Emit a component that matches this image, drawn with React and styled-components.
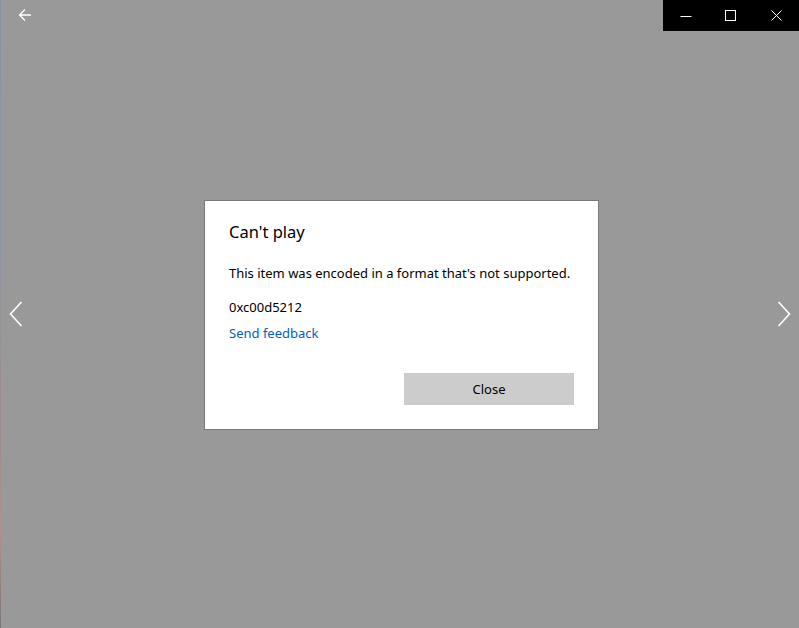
import React from 'react'
import styled, { createGlobalStyle } from 'styled-components'

const GlobalStyle = createGlobalStyle`
  html, body {
    margin: 0;
    padding: 0;
    overflow: hidden;
  }
  body {
    font-family: 'Noto Sans', 'Open Sans', sans-serif;
  }
`

const Screen = styled.div`
  background-color: #999999;
  border-left: 1px solid transparent;
  border-image: linear-gradient(to bottom, #8a949f 0%, #8e96a0 40%, #a08c8c 70%, #b09088 85%, #7a7676 100%) 1;
  box-sizing: border-box;
  display: grid;
  grid-template-rows: 32px 1fr 32px;
  height: 628px;
  width: 799px;
`

const TopBar = styled.div`
  align-items: flex-start;
  display: flex;
  justify-content: space-between;
`

const BackButton = styled.div`
  align-items: center;
  display: flex;
  height: 30px;
  justify-content: center;
  width: 48px;
`

const WindowControls = styled.div`
  background-color: #000000;
  display: flex;
  height: 31px;
  width: 136px;
`

const ControlButton = styled.div`
  align-items: center;
  display: flex;
  flex: 1;
  justify-content: center;
`

const Stage = styled.div`
  align-items: center;
  display: grid;
  grid-template-columns: 30px 1fr 30px;
`

const Flip = styled.div`
  align-items: center;
  display: flex;
  justify-content: center;
`

const DialogSlot = styled.div`
  display: flex;
  justify-content: center;
  margin-left: 3px;
  margin-top: 2px;
`

const Dialog = styled.div`
  background-color: #ffffff;
  border: 1px solid #7a7a7a;
  box-sizing: border-box;
  display: flex;
  flex-direction: column;
  height: 230px;
  padding: 19px 24px 24px;
  width: 395px;
`

const Title = styled.h2`
  color: #000000;
  font-size: 16.5px;
  font-weight: 400;
  line-height: 24px;
  margin: 0 0 19px;
`

const Text = styled.p`
  color: #000000;
  font-size: 13px;
  line-height: 20px;
  margin: ${p => p.$gap || '0'};
`

const Link = styled.a`
  color: #0063b1;
  font-size: 13px;
  line-height: 20px;
  text-decoration: none;
`

const Actions = styled.div`
  display: flex;
  justify-content: flex-end;
  margin-top: auto;
`

const Button = styled.button`
  background-color: #cccccc;
  border: none;
  color: #000000;
  font-family: inherit;
  font-size: 13px;
  height: 32px;
  padding: 0;
  width: 170px;
`

function App() {
  return (
    <>
      <GlobalStyle />
      <Screen>
        <TopBar>
          <BackButton>
            <svg width="14" height="14" viewBox="0 0 14 14" fill="none" stroke="#ffffff" strokeWidth="1.3">
              <path d="M13 7H1.5M7 1.5L1.5 7L7 12.5" />
            </svg>
          </BackButton>
          <WindowControls>
            <ControlButton>
              <svg width="12" height="12" viewBox="0 0 12 12" stroke="#ffffff" strokeWidth="1">
                <path d="M0.5 6.5H11.5" />
              </svg>
            </ControlButton>
            <ControlButton>
              <svg width="11" height="11" viewBox="0 0 11 11" fill="none" stroke="#ffffff" strokeWidth="1">
                <rect x="0.5" y="0.5" width="10" height="10" />
              </svg>
            </ControlButton>
            <ControlButton>
              <svg width="11" height="11" viewBox="0 0 11 11" stroke="#ffffff" strokeWidth="1">
                <path d="M0.5 0.5L10.5 10.5M10.5 0.5L0.5 10.5" />
              </svg>
            </ControlButton>
          </WindowControls>
        </TopBar>
        <Stage>
          <Flip>
            <svg width="14" height="26" viewBox="0 0 14 26" fill="none" stroke="#ffffff" strokeWidth="1.6">
              <path d="M12.5 1L1.5 13L12.5 25" />
            </svg>
          </Flip>
          <DialogSlot>
            <Dialog>
              <Title>Can't play</Title>
              <Text $gap="0 0 14px">This item was encoded in a format that's not supported.</Text>
              <Text $gap="0 0 6px">0xc00d5212</Text>
              <Link href="#">Send feedback</Link>
              <Actions>
                <Button>Close</Button>
              </Actions>
            </Dialog>
          </DialogSlot>
          <Flip>
            <svg width="14" height="26" viewBox="0 0 14 26" fill="none" stroke="#ffffff" strokeWidth="1.6">
              <path d="M1.5 1L12.5 13L1.5 25" />
            </svg>
          </Flip>
        </Stage>
        <div />
      </Screen>
    </>
  )
}

export default App
